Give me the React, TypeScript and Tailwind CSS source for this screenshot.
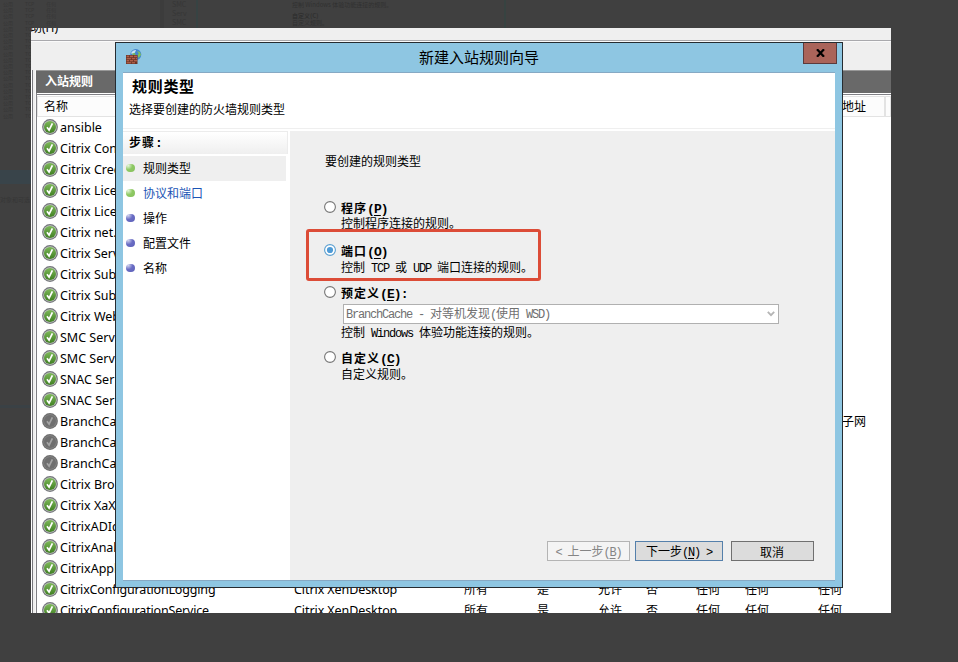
import React from "react";

const song = "font-['Noto_Sans_CJK_SC',sans-serif] text-[12px]";
const ui = "font-['Noto_Sans','Noto_Sans_CJK_SC',sans-serif] text-[12px]";

const rules: { name: string; on: boolean }[] = [
  { name: "ansible", on: true },
  { name: "Citrix Con", on: true },
  { name: "Citrix Cred", on: true },
  { name: "Citrix Lice", on: true },
  { name: "Citrix Lice", on: true },
  { name: "Citrix net.f", on: true },
  { name: "Citrix Serv", on: true },
  { name: "Citrix Sub", on: true },
  { name: "Citrix Sub", on: true },
  { name: "Citrix Web", on: true },
  { name: "SMC Serv", on: true },
  { name: "SMC Serv", on: true },
  { name: "SNAC Ser", on: true },
  { name: "SNAC Ser", on: true },
  { name: "BranchCa", on: false },
  { name: "BranchCa", on: false },
  { name: "BranchCa", on: false },
  { name: "Citrix Bro", on: true },
  { name: "Citrix XaX", on: true },
  { name: "CitrixADId", on: true },
  { name: "CitrixAnaly", on: true },
  { name: "CitrixAppl", on: true },
  { name: "CitrixConfigurationLogging", on: true },
  { name: "CitrixConfigurationService", on: true },
];

/* Sets Latin runs in a half-width monospace beside full-width Chinese glyphs. */
function Mixed({ text, bold }: { text: string; bold?: boolean }) {
  return (
    <>
      {text.split(/([\x20-\x7e]+)/).filter(Boolean).map((run, i) =>
        /^[\x20-\x7e]/.test(run) ? (
          <span
            key={i}
            className={`whitespace-pre font-['Liberation_Mono',monospace] ${bold ? "text-[13px] tracking-[-0.9px]" : "text-[12px] tracking-[-1.2px]"}`}
          >
            {run}
          </span>
        ) : (
          <span key={i}>{run}</span>
        )
      )}
    </>
  );
}

function Key({ text, letter, after = "", bold }: { text: string; letter: string; after?: string; bold?: boolean }) {
  return (
    <>
      <Mixed text={`${text}(`} bold={bold} />
      <span className="underline underline-offset-2">
        <Mixed text={letter} bold={bold} />
      </span>
      <Mixed text={`)${after}`} bold={bold} />
    </>
  );
}

function CheckIcon({ on }: { on: boolean }) {
  return (
    <svg width="16" height="16" viewBox="0 0 16 16" className="-mt-px shrink-0">
      <defs>
        <linearGradient id="okFill" x1="0" y1="0" x2="0" y2="1">
          <stop offset="0" stopColor="#7db85a" />
          <stop offset="1" stopColor="#3f7f22" />
        </linearGradient>
      </defs>
      <circle cx="8" cy="8" r="7.9" fill={on ? "#73767a" : "#6e6e6e"} />
      <circle cx="8" cy="8" r="6.7" fill={on ? "#c4c7c4" : "#878787"} />
      <circle cx="8" cy="8" r="6" fill={on ? "url(#okFill)" : "#6f6f6f"} />
      <path d="M5 8.2 L7.1 11.2 L10.4 4.4" fill="none" stroke={on ? "#fff" : "#a5a5a5"} strokeWidth="1.7" />
    </svg>
  );
}

function FirewallIcon() {
  return (
    <svg width="16" height="16" viewBox="0 0 16 16">
      <circle cx="9.8" cy="5.6" r="5.5" fill="#4385d0" />
      <path d="M5 4 Q7 0.6 10 1 L9 3.5 L6.5 5.5 Z" fill="#c9e6f2" />
      <path d="M11 2 L14 3 L15 6 L12.5 9 L11.5 6 L12.8 4.6 Z" fill="#7fc25a" />
      <path d="M6 4.5 L9 4 L9.5 6 L7 6.5 Z" fill="#72b85c" />
      <rect x="0" y="6" width="11.5" height="9" fill="#6b3426" />
      <g fill="#b0604a">
        <rect x="0.6" y="6.6" width="2.6" height="1.6" />
        <rect x="4" y="6.6" width="3.2" height="1.6" />
        <rect x="8" y="6.6" width="3" height="1.6" />
        <rect x="0.6" y="8.9" width="4.4" height="1.4" />
        <rect x="5.8" y="8.9" width="3.2" height="1.4" />
        <rect x="9.7" y="8.9" width="1.4" height="1.4" />
        <rect x="0.6" y="11" width="2.6" height="1.4" />
        <rect x="4" y="11" width="3.2" height="1.4" />
        <rect x="8" y="11" width="3" height="1.4" />
        <rect x="0.6" y="13.1" width="4.4" height="1.3" />
        <rect x="5.8" y="13.1" width="3.2" height="1.3" />
      </g>
    </svg>
  );
}

function Bullet({ green }: { green?: boolean }) {
  return (
    <span
      className={`mb-[2px] h-[8px] w-[9px] rounded-full ${
        green
          ? "bg-[radial-gradient(circle_at_25%_20%,#e6f5dc_0,#8ec963_45%,#86bf5e_100%)]"
          : "bg-[radial-gradient(circle_at_25%_15%,#d5d7f0_0,#6a6dc4_45%,#5d60b8_100%)]"
      }`}
    />
  );
}

function Radio({ checked }: { checked?: boolean }) {
  return (
    <svg width="12" height="12" viewBox="0 0 12 12" className="mt-px shrink-0">
      <circle cx="6" cy="6" r="5.4" fill="#fff" stroke={checked ? "#5a9fd0" : "#767676"} strokeWidth="1.1" />
      {checked && <circle cx="6" cy="6" r="3.1" fill="#4f9bd6" />}
    </svg>
  );
}

function Step({ label, kind }: { label: string; kind: "current" | "next" | "todo" }) {
  return (
    <div
      className={`flex h-[25px] w-[163px] items-center gap-[8px] pl-[3px] ${kind === "current" ? "bg-[#efefef]" : ""} ${
        kind === "next" ? "text-[#1b55b5]" : ""
      }`}
    >
      <Bullet green={kind !== "todo"} />
      <span className="mb-[2px]">{label}</span>
    </div>
  );
}

function Option({
  label,
  letter,
  after,
  checked,
  children,
}: {
  label: string;
  letter: string;
  after?: string;
  checked?: boolean;
  children: React.ReactNode;
}) {
  return (
    <div className="flex gap-[5px]">
      <Radio checked={checked} />
      <div className="min-w-0 flex-1">
        <div className="h-[16px] leading-[16px] font-bold tracking-[1px]">
          <Key text={label} letter={letter} after={after} bold />
        </div>
        {children}
      </div>
    </div>
  );
}

function Row({ name, on, full }: { name: string; on: boolean; full: boolean }) {
  return (
    <div className="flex h-[21px] items-center whitespace-nowrap leading-[21px]">
      <div className="flex w-[252px] items-center gap-[2px]">
        <CheckIcon on={on} />
        <span className={full ? "text-[12.5px] tracking-[-0.17px]" : "text-[12.5px]"}>{name}</span>
      </div>
      {full && (
        <>
          <span className="w-[170px] text-[12.5px] tracking-[-0.08px]">Citrix XenDesktop</span>
          <span className="w-[73px]">所有</span>
          <span className="w-[61px]">是</span>
          <span className="w-[48px]">允许</span>
          <span className="w-[50px]">否</span>
          <span className="w-[49px]">任何</span>
          <span className="w-[73px]">任何</span>
          <span>任何</span>
        </>
      )}
    </div>
  );
}

function Backdrop() {
  return (
    <div className="absolute inset-0 overflow-hidden bg-[#404040] font-['Noto_Sans_CJK_SC',sans-serif] text-[5px] text-[#363636]">
      <div className="absolute left-[3px] top-[1px] flex gap-[12px] leading-[6.2px]">
        {["公用", "TCP", "任何"].map((t) => (
          <div key={t}>
            {Array.from({ length: t === "任何" ? 4 : 19 }, (_, i) => (
              <div key={i}>{t}</div>
            ))}
          </div>
        ))}
      </div>
      <div className="absolute left-[160px] top-0 h-[28px] w-[38px] border-l-4 border-r-2 border-l-[#3c3c3c] border-r-[#374343] pl-[8px] text-[7px] leading-[9px]">
        {[0, 1, 2].map((i) => (
          <div key={i}>SMC Serv</div>
        ))}
      </div>
      <div className="absolute left-[292px] top-[0px] text-[6px] leading-[9px] text-[#303030]">控制 Windows 体验功能连接的规则。</div>
      <div className="absolute left-[292px] top-[12px] text-[6px] leading-[7px] text-[#303030]">
        <div className="font-bold">自定义(C)</div>
        <div>自定义规则。</div>
      </div>
      <div className="absolute left-[504px] top-0 h-[28px] w-[2px] bg-[#374341]" />
      <div className="absolute left-0 top-[170px] h-[14px] w-[31px] bg-[#39444a]" />
      <div className="absolute left-0 top-[196px] text-[6px] leading-[8px]">对象和可选</div>
      <div className="absolute left-0 top-[405px] h-[3px] w-[31px] bg-[#3a4145]" />
    </div>
  );
}

function Manager() {
  return (
    <div className={`flex h-[585px] w-[860px] flex-col overflow-hidden bg-[#efefef] text-black ${ui}`}>
      <div className="h-[12px] shrink-0 overflow-hidden">
        <div className="-ml-[1px] -mt-[8px] text-[12px] leading-[16px]">助(H)</div>
      </div>
      <div className="h-[30px] shrink-0 border-t border-[#a9a9ad] bg-[#efefef] shadow-[inset_0_1px_0_#fafafa]" />
      <div className="flex min-h-0 flex-1">
        <div className="w-[5px] shrink-0 border-r border-[#f8f8f8] bg-[#efefef]">
          <div className="h-full w-[2px] border-r border-[#77777c] bg-white" />
        </div>
        <div className="flex min-w-0 flex-1 flex-col">
          <div className="h-[23px] shrink-0 border-t border-[#989898] bg-[#696969] pl-[9px] text-[12px] font-bold leading-[22px] text-white">
            入站规则
          </div>
          <div className="flex min-h-0 flex-1 flex-col border-l border-[#808085] bg-white">
            <div className="mt-px h-[2px] shrink-0 border-t border-[#808085]" />
            <div className="flex h-[21px] shrink-0 border border-[#e3e3e3] bg-[#fcfcfc] leading-[20px]">
              <span className="w-[798px] pl-[6px]">名称</span>
              <span className="w-[50px] border-r-2 border-[#e3e3e3] pl-[6px]">地址</span>
            </div>
            <div className="relative pl-[5px]">
              {rules.map((r, i) => (
                <Row key={i} name={r.name} on={r.on} full={i >= 22} />
              ))}
              <span className="absolute left-[805px] top-[294px] leading-[21px]">子网</span>
            </div>
          </div>
        </div>
      </div>
    </div>
  );
}

function Wizard() {
  return (
    <div className={`absolute left-[115px] top-[42px] flex h-[546px] w-[728px] flex-col border border-[#262c31] bg-[#8ec6e2] px-[7px] text-black ${song}`}>
      <div className="relative flex h-[29px] shrink-0 items-center justify-center">
        <div className="absolute left-[3px] top-[6px]">
          <FirewallIcon />
        </div>
        <span className="mb-[2px] text-[15px] leading-[20px]">新建入站规则向导</span>
        <div className="absolute -right-[2px] top-0 flex h-[21px] w-[34px] items-center justify-center border border-t-0 border-[#5c3a3c] bg-[#aa645a]">
          <svg width="9" height="8" viewBox="0 0 9 8">
            <path d="M1 0.2 L8 7.8 M8 0.2 L1 7.8" stroke="#000" strokeWidth="2.2" />
          </svg>
        </div>
      </div>
      <div className="flex h-[509px] shrink-0 flex-col border-y border-[#86a9c4] bg-white">
        <div className="h-[56px] shrink-0 border-b border-[#efefef] pl-[6px]">
          <div className="mt-[3px] pl-[3px] text-[15px] font-bold leading-[20px] tracking-[0.7px]">规则类型</div>
          <div className="mt-[5px] leading-[16px]">选择要创建的防火墙规则类型</div>
        </div>
        <div className="mt-[2px] flex min-h-0 flex-1">
          <div className="w-[167px] shrink-0">
            <div className="h-[23px] w-[165px] border-r border-t border-[#ececec] bg-linear-to-b from-white to-[#efefef] pl-[6px] font-bold leading-[20px] tracking-[1px]">
              <Mixed text="步骤:" bold />
            </div>
            <div className="mt-[2px]">
              <Step label="规则类型" kind="current" />
              <Step label="协议和端口" kind="next" />
              <Step label="操作" kind="todo" />
              <Step label="配置文件" kind="todo" />
              <Step label="名称" kind="todo" />
            </div>
          </div>
          <div className="flex flex-1 flex-col bg-[#efefef]">
            <div className="pl-[35px] pt-[22px] leading-[16px]">要创建的规则类型</div>
            <div className="mt-[31px] flex flex-col pl-[34px] leading-[16px]">
              <div className="h-[43px]">
                <Option label="程序" letter="P">
                  <div className="h-[15px] leading-[14px]">控制程序连接的规则。</div>
                </Option>
              </div>
              <div className="relative h-[42px]">
                <Option label="端口" letter="O" checked>
                  <div>
                    <Mixed text="控制 TCP 或 UDP 端口连接的规则。" />
                  </div>
                </Option>
                <div className="absolute -left-[18px] -top-[14px] h-[52px] w-[235px] rounded-[3px] border-[3px] border-[#dc4c37]" />
              </div>
              <div className="h-[65px]">
                <Option label="预定义" letter="E" after=":">
                  <div className="ml-[2px] mt-[3px] flex h-[20px] w-[436px] items-center justify-between border border-[#b0b0b0] bg-white pl-[2px] pr-[3px] text-[#707070]">
                    <span>
                      <Mixed text="BranchCache - 对等机发现(使用 WSD)" />
                    </span>
                    <svg width="8" height="6" viewBox="0 0 8 6">
                      <path d="M0.8 0.8 L4 4.2 L7.2 0.8" fill="none" stroke="#b5b5b5" strokeWidth="1.8" />
                    </svg>
                  </div>
                  <div>
                    <Mixed text="控制 Windows 体验功能连接的规则。" />
                  </div>
                </Option>
              </div>
              <Option label="自定义" letter="C">
                <div className="leading-[15px]">自定义规则。</div>
              </Option>
            </div>
            <div className="mb-[19px] mt-auto flex justify-end pr-[21px] leading-[20px]">
              <div className="flex h-[20px] w-[83px] items-center justify-center border border-[#b4b4b4] bg-[#f4f4f4] pt-px text-[#858585]">
                <span>
                  <Mixed text="< " />
                  <Key text="上一步" letter="B" />
                </span>
              </div>
              <div className="ml-[5px] flex h-[20px] w-[88px] items-center justify-center border border-[#5580ab] bg-[#dcdcdc] pt-px">
                <span>
                  <Key text="下一步" letter="N" after=" >" />
                </span>
              </div>
              <div className="ml-[8px] flex h-[20px] w-[83px] items-center justify-center border border-[#707070] bg-[#dcdcdc] pr-px pt-px">
                取消
              </div>
            </div>
          </div>
        </div>
      </div>
    </div>
  );
}

export default function App() {
  return (
    <div className="relative h-[662px] w-[958px] overflow-hidden">
      <Backdrop />
      <div className="relative pl-[31px] pt-[28px]">
        <Manager />
      </div>
      <Wizard />
    </div>
  );
}
